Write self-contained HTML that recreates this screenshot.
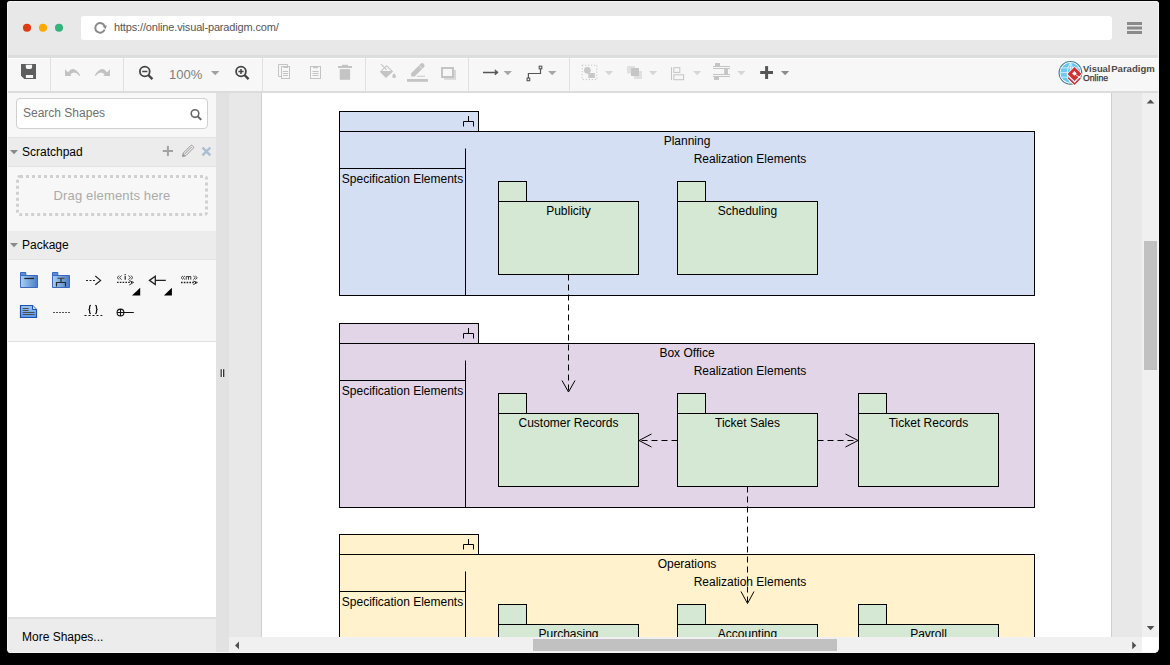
<!DOCTYPE html>
<html><head><meta charset="utf-8">
<style>
*{box-sizing:border-box;margin:0;padding:0}
html,body{width:1170px;height:665px;overflow:hidden;background:#000;font-family:"Liberation Sans",sans-serif}
.abs{position:absolute}
#frame{position:absolute;left:7px;top:1px;width:1152px;height:652px;background:#e8e8e8}
#edge{position:absolute;left:7px;top:1px;width:1152px;height:652px;border-radius:3px 3px 5px 4px;border:1px solid #f4f4f4;pointer-events:none}
svg{position:absolute;left:0;top:0}
.t12{font-size:12px;font-family:"Liberation Sans",sans-serif}
</style></head>
<body>
<div id="app" style="position:absolute;left:0;top:0;width:1170px;height:665px;clip-path:inset(1px 11px 12px 7px round 3px 3px 5px 4px)">
<div id="frame"></div>

<!-- title bar -->
<div class="abs" style="left:81px;top:16px;width:1031px;height:24px;background:#fff;border-radius:3px"></div>
<div class="abs" style="left:114px;top:20px;font-size:11px;color:#555;line-height:14px;letter-spacing:-0.15px">https://online.visual-paradigm.com/</div>

<!-- toolbar band -->
<div class="abs" style="left:8px;top:55px;width:1150px;height:3px;background:#dcdedd"></div>
<div class="abs" style="left:8px;top:58px;width:1150px;height:1px;background:#fdfdfd"></div>
<div class="abs" style="left:8px;top:59px;width:1150px;height:32px;background:#f7f7f7"></div>
<div class="abs" style="left:8px;top:91px;width:1150px;height:2px;background:#dcdcdc"></div>

<!-- sidebar -->
<div class="abs" style="left:8px;top:93px;width:208px;height:44px;background:#f7f7f7"></div>
<div class="abs" style="left:16px;top:98px;width:192px;height:31px;background:#fff;border:1px solid #d0d0d0;border-radius:4px"></div>
<div class="abs" style="left:23px;top:106px;font-size:12px;color:#707070;line-height:14px">Search Shapes</div>
<div class="abs" style="left:8px;top:137px;width:208px;height:30px;background:#ececec;border-top:1px solid #e2e2e2;border-bottom:1px solid #e2e2e2"></div>
<div class="abs" style="left:22px;top:145px;font-size:12px;color:#000;line-height:14px">Scratchpad</div>
<div class="abs" style="left:8px;top:167px;width:208px;height:64px;background:#f7f7f7"></div>
<div class="abs" style="left:16px;top:175px;width:192px;height:41px;border:3px dotted #d0d0d0;border-radius:4px"></div>
<div class="abs" style="left:8px;top:188px;width:208px;text-align:center;font-size:13px;color:#aaaaaa;line-height:16px;letter-spacing:0.15px">Drag elements here</div>
<div class="abs" style="left:8px;top:231px;width:208px;height:29px;background:#ececec;border-bottom:1px solid #e2e2e2"></div>
<div class="abs" style="left:22px;top:238px;font-size:12px;color:#000;line-height:14px">Package</div>
<div class="abs" style="left:8px;top:260px;width:208px;height:81px;background:#f7f7f7"></div>
<div class="abs" style="left:8px;top:341px;width:208px;height:1px;background:#e0e0e0"></div>
<div class="abs" style="left:8px;top:342px;width:208px;height:275px;background:#fff"></div>
<div class="abs" style="left:8px;top:617px;width:208px;height:36px;background:#ececec;border-top:2px solid #e0e0e0"></div>
<div class="abs" style="left:22px;top:630px;font-size:12px;color:#000;line-height:14px">More Shapes...</div>

<!-- divider + canvas -->
<div class="abs" style="left:216px;top:93px;width:13px;height:560px;background:#e2e2e2"></div>
<div class="abs" style="left:229px;top:93px;width:913px;height:544px;background:#e8e8e8"></div>
<div class="abs" style="left:261px;top:93px;width:851px;height:544px;background:#fff;border-left:1px solid #cfcfcf;border-right:1px solid #cfcfcf"></div>

<!-- scrollbars -->
<div class="abs" style="left:1142px;top:93px;width:16px;height:544px;background:#f0f0f0"></div>
<div class="abs" style="left:1144px;top:241px;width:13px;height:129px;background:#c1c1c1"></div>
<div class="abs" style="left:229px;top:637px;width:913px;height:16px;background:#f0f0f0"></div>
<div class="abs" style="left:533px;top:639px;width:304px;height:12px;background:#c1c1c1"></div>
<div class="abs" style="left:1142px;top:637px;width:16px;height:16px;background:#fff"></div>

<!-- all vector stuff -->
<svg width="1170" height="665" viewBox="0 0 1170 665">
  <!-- traffic lights -->
  <circle cx="27" cy="27.7" r="4.05" fill="#df3a13"/>
  <circle cx="43" cy="27.7" r="4.05" fill="#fdab00"/>
  <circle cx="59" cy="27.7" r="4.05" fill="#35b37d"/>
  <!-- reload -->
  <path d="M104.6 29.5 A4.8 4.8 0 1 1 104.6 26.3" fill="none" stroke="#8a8a8a" stroke-width="2"/>
  <path d="M102.8 26.6 L106.9 25.2 L105.6 29.3 Z" fill="#8a8a8a"/>
  <!-- hamburger -->
  <rect x="1127" y="22" width="15" height="3" fill="#8a8a8a"/>
  <rect x="1127" y="26.5" width="15" height="3" fill="#8a8a8a"/>
  <rect x="1127" y="31" width="15" height="3" fill="#8a8a8a"/>


  <!-- save -->
  <path d="M21 64H36V79H24.3L21 75.7Z M25.8 64.8V67.2Q25.8 69 27.6 69H30.3Q32.1 69 32.1 67.2V64.8Z M25.9 75V78H33.1V75Z" fill="#5e5e5e" fill-rule="evenodd"/>
  <!-- undo / redo -->
  <g fill="#c2c2c2">
    <path d="M65 69.3V76H71.6Z"/>
    <path d="M67.4 73.2Q73.5 63.6 80.3 75.4L79.5 75.9Q73.5 69.6 69.9 75.2Z"/>
    <path d="M110 69.3V76H103.4Z"/>
    <path d="M107.6 73.2Q101.5 63.6 94.7 75.4L95.5 75.9Q101.5 69.6 105.1 75.2Z"/>
  </g>
  <!-- zoom out/in -->
  <g fill="none" stroke="#444">
    <circle cx="144.8" cy="71.5" r="4.9" stroke-width="1.8"/>
    <path d="M148.3 75 L152.4 79.1" stroke-width="2.4"/>
    <path d="M142.2 71.5H147.4" stroke-width="1.5"/>
    <circle cx="241" cy="71.5" r="4.9" stroke-width="1.8"/>
    <path d="M244.5 75 L248.6 79.1" stroke-width="2.4"/>
    <path d="M238.4 71.5H243.6M241 68.9V74.1" stroke-width="1.5"/>
  </g>
  <text x="169" y="79" font-family="Liberation Sans, sans-serif" font-size="13" fill="#7e7e7e">100%</text>
  <g fill="#a0a0a0">
    <path d="M211 71H219.4L215.2 75.2Z"/>
  </g>
  <!-- copy / paste / delete -->
  <g fill="none" stroke="#c4c4c4" stroke-width="1">
    <path d="M281.5 76.5H278.5V64.5H287.5V66.5"/>
    <rect x="281.5" y="66.5" width="8" height="12" fill="#f7f7f7"/>
    <path d="M283 71.5H288M283 73.5H288M283 75.5H288"/>
    <rect x="310.5" y="66.5" width="10" height="12"/>
    <path d="M312.5 71.5H318.5M312.5 73.5H318.5M312.5 75.5H318.5"/>
  </g>
  <g fill="#c4c4c4">
    <rect x="283.5" y="66.8" width="4.5" height="1.2"/>
    <rect x="313" y="66.8" width="5" height="1.4"/>
    <rect x="338" y="66" width="14" height="2"/>
    <rect x="342" y="64.8" width="6" height="1.4"/>
    <rect x="339.8" y="69.1" width="10.3" height="10.7"/>
  </g>
  <!-- fill / line / shadow -->
  <g fill="#c4c4c4">
    <path d="M386.5 65L393.2 71.4L385.9 78L379.8 71.7Z"/>
    <path d="M381.9 70.9 L386.5 66.6 L391.1 70.9Z" fill="#f7f7f7"/>
    <path d="M394.1 73.2Q396 75.4 396 76.2A1.9 1.9 0 0 1 392.2 76.2Q392.2 75.4 394.1 73.2Z"/>
    <path d="M381 64.2L386.6 69.8" stroke="#c4c4c4" stroke-width="1.1" fill="none"/>
    <path d="M411.2 73.2L420.9 63.5Q422.4 62.5 423.9 64Q425.2 65.5 424.2 66.9L414.6 76.6H411.2Z"/>
    <path d="M419 65.6L422.6 69.2" stroke="#f7f7f7" stroke-width="0.7" fill="none"/>
    <rect x="407" y="79" width="21" height="2.8"/>
    <rect x="417" y="75.8" width="8" height="0.9"/>
    <rect x="444.2" y="70" width="11.8" height="9.8" fill="#d8d8d8"/>
    <path d="M441 67H454V78H441Z M443 69V76H452V69Z" fill-rule="evenodd"/>
    <rect x="443" y="69" width="9" height="7" fill="#f7f7f7"/>
  </g>
  <!-- connector arrow / waypoint -->
  <g stroke="#555" fill="none">
    <path d="M483 72.4H496" stroke-width="1.5"/>
    <path d="M495 69.8L498.2 72.4L495 75Q496.2 72.4 495 69.8Z" fill="#555" stroke-width="0.8"/>
    <path d="M528.4 77.9V73.5H540.5V69" stroke-width="1.2"/>
    <rect x="527.1" y="78.1" width="2.6" height="2.6" stroke-width="1.1"/>
    <rect x="539.2" y="66.2" width="2.6" height="2.6" stroke-width="1.1"/>
  </g>
  <g fill="#a6a6a6">
    <path d="M503.6 71H512L507.8 75.2Z"/>
    <path d="M548 71H556.4L552.2 75.2Z"/>
  </g>
  <!-- group / arrange / align / distribute -->
  <g fill="#c8c8c8">
    <rect x="582.2" y="65.2" width="14.6" height="14.4" fill="none" stroke="#bdbdbd" stroke-width="1" stroke-dasharray="1 2"/>
    <circle cx="587.4" cy="70.3" r="3.4"/>
    <rect x="588.3" y="73" width="6.6" height="5"/>
    <path d="M604.8 71H613.2L609 75.2Z" fill="#d6d6d6"/>
    <rect x="627" y="66" width="8" height="7.5" fill="#e0e0e0"/>
    <rect x="634" y="71" width="8" height="8" fill="#e0e0e0"/>
    <rect x="631" y="68" width="8" height="8" fill="#c6c6c6"/>
    <path d="M648.8 71H657.2L653 75.2Z" fill="#d6d6d6"/>
    <path d="M693 71H701.2L697.1 75.2Z" fill="#d6d6d6"/>
    <path d="M781 71H789.2L785.1 75.2Z" fill="#8c8c8c"/>
    <path d="M737.2 71H745.4L741.3 75.2Z" fill="#d6d6d6"/>
  </g>
  <g fill="none" stroke="#c4c4c4" stroke-width="1">
    <path d="M671.5 67.2V80"/>
    <rect x="673.8" y="67.7" width="6" height="4.7"/>
    <rect x="673.8" y="74.8" width="9.8" height="4.9"/>
    <path d="M713 66.5H730M713 68.5H730M713 74.5H730M713 76.5H730"/>
  </g>
  <g fill="#c4c4c4">
    <rect x="715" y="63" width="5" height="3.2"/>
    <rect x="724.2" y="68.5" width="3.7" height="6"/>
    <rect x="714" y="76.5" width="5" height="3.4"/>
  </g>
  <g fill="#555">
    <rect x="760.2" y="71" width="12.8" height="3"/>
    <rect x="765.1" y="66.1" width="3" height="12.9"/>
  </g>


  <!-- logo -->
  <g>
    <circle cx="1070.4" cy="72.8" r="11.3" fill="#fff" stroke="#3d7c99" stroke-width="1.1"/>
    <circle cx="1070.4" cy="72.8" r="10" fill="#6cc8f2"/>
    <g fill="none" stroke="#e6f6fd" stroke-width="0.8">
      <path d="M1060.4 67.9H1080.4M1060.4 72.6H1080.4M1060.4 77.2H1080.4"/>
      <path d="M1070.4 62.8V82.8"/>
      <path d="M1070.4 62.8Q1064 72.8 1070.4 82.8M1070.4 62.8Q1076.8 72.8 1070.4 82.8"/>
    </g>
    <path d="M1066.8 78.6L1074.5 86L1082 78.6L1080.6 77.3L1074.5 83.2L1068.2 77.3Z" fill="#fff"/>
    <path d="M1066.5 74.2L1074.5 66.2L1082.4 74.2L1074.5 82.1Z" fill="#fff"/>
    <path d="M1067.5 74.1L1074.5 67L1081.5 74.1L1074.5 81.1Z" fill="#d0302f"/>
    <path d="M1067.6 78.3L1074.5 85L1081.3 78.3L1080.2 77.3L1074.5 82.9L1068.7 77.3Z" fill="#d0302f"/>
    <path d="M1072.1 73.4L1074.4 71.1L1076.7 73.4L1074.4 75.7Z" fill="#fff"/>
    <path d="M1075.6 74.6L1080.6 78.2" stroke="#fff" stroke-width="0.9"/>
  </g>
  <text x="1083" y="72" font-family="Liberation Sans, sans-serif" font-size="9.4" font-weight="bold" fill="#4a4a4a" textLength="27.4" lengthAdjust="spacingAndGlyphs">Visual</text>
  <text x="1111.2" y="72" font-family="Liberation Sans, sans-serif" font-size="9.4" font-weight="bold" fill="#4a4a4a" textLength="43.6" lengthAdjust="spacingAndGlyphs">Paradigm</text>
  <text x="1083" y="80.7" font-family="Liberation Sans, sans-serif" font-size="9" fill="#333" stroke="#333" stroke-width="0.25" textLength="25" lengthAdjust="spacingAndGlyphs">Online</text>


  <!-- sidebar icons -->
  <g fill="none" stroke="#666" stroke-width="1.6">
    <circle cx="195" cy="113.6" r="3.8"/>
    <path d="M197.8 116.5L201.3 119.9" stroke-width="2"/>
  </g>
  <g fill="#8a8a8a">
    <path d="M10 150H18L14 154.2Z"/>
    <path d="M10 243H18L14 247.2Z"/>
  </g>
  <g fill="#a2a2a2">
    <rect x="162.8" y="150" width="10.2" height="2"/>
    <rect x="166.9" y="145.9" width="2" height="10.2"/>
  </g>
  <g fill="none" stroke="#9a9a9a" stroke-width="1">
    <path d="M182.5 156.3L183.3 153L190.8 145.5Q191.6 144.9 192.4 145.6L193.4 146.6Q194 147.4 193.4 148.1L185.9 155.6Z"/>
    <path d="M184.3 154.4L191.8 146.9"/>
  </g>
  <path d="M182.2 157L183 153.6L185.6 156.2Z" fill="#9a9a9a"/>
  <path d="M202.5 147.5L210.3 155.3M210.3 147.5L202.5 155.3" stroke="#a9bdd5" stroke-width="2.4" fill="none"/>


  <!-- package shapes -->
  <defs>
    <linearGradient id="fold" x1="0" y1="0" x2="1" y2="0">
      <stop offset="0" stop-color="#a6d0f3"/><stop offset="1" stop-color="#4b7bc9"/>
    </linearGradient>
    <linearGradient id="note" x1="0" y1="0" x2="0" y2="1">
      <stop offset="0" stop-color="#9cc4f0"/><stop offset="1" stop-color="#5a96e6"/>
    </linearGradient>
  </defs>
  <g stroke="#3b68bd" stroke-width="1" fill="url(#fold)">
    <path d="M20.5 272.5H25.8V275.5H20.5Z" fill="#5b8fd3"/>
    <path d="M20.5 287.5V275.5H37.5V287.5Z"/>
    <path d="M52.5 272.5H57.8V275.5H52.5Z" fill="#5b8fd3"/>
    <path d="M52.5 287.5V275.5H69.5V287.5Z"/>
  </g>
  <path d="M24.3 278.5H34" stroke="#222" stroke-width="1.2"/>
  <g stroke="#2a2a2a" fill="none" stroke-width="1">
    <path d="M57.5 278.3H64.5" stroke-width="1.3" stroke="#555"/>
    <path d="M61 278.3V282.3M56.5 286.5V282.5H65.5V286.5" stroke-width="1.2"/>
  </g>
  <g stroke="#222" fill="none" stroke-width="1.2">
    <path d="M86 280.5H95" stroke-dasharray="2 1.5"/>
    <path d="M95.3 276L100.6 280.4L95.3 284.7"/>
    <path d="M117 282.4H132" stroke-dasharray="1.6 1.2" stroke-width="1.4"/>
    <path d="M129.2 280.6L133.6 282.4L129.2 285" stroke-width="0.9"/>
    <path d="M149.5 280.4L155.3 276.2V284.6Z M155.3 280.4H165.8" stroke-width="1.3"/>
    <path d="M181 282.5H196" stroke-dasharray="1.6 1.2" stroke-width="1.4"/>
    <path d="M193.3 281L197.4 282.5L193.3 284.6" stroke-width="0.9"/>
  </g>
  <g stroke="#3a3a3a" fill="none" stroke-width="0.9">
    <path d="M119.3 275.6L117 277.6L119.3 279.6M121.7 275.6L119.4 277.6L121.7 279.6"/>
    <path d="M128.3 275.6L130.6 277.6L128.3 279.6M130.7 275.6L133 277.6L130.7 279.6"/>
    <path d="M183 275.9L181 277.7L183 279.6M185 275.9L183 277.7L185 279.6"/>
    <path d="M193.3 275.9L195.3 277.7L193.3 279.6M195.3 275.9L197.3 277.7L195.3 279.6"/>
    <path d="M186.2 279.7V276.6H190.8V279.7M188.5 276.6V279.7" stroke-width="1"/>
  </g>
  <g fill="#4a4a4a">
    <rect x="124.5" y="274.1" width="1.5" height="1.1"/>
    <rect x="124.5" y="276.1" width="1.5" height="3.6"/>
  </g>
  <path d="M132 295.6L140.2 287.8V295.6Z M163.9 295.6L171.9 287.8V295.6Z" fill="#000"/>
  <path d="M20.5 317.5V305.5H32.5L36.5 309.5V317.5Z" fill="url(#note)" stroke="#1f4fae" stroke-width="1.2"/>
  <path d="M32.5 305.5V309.5H36.5" fill="#d8e8fa" stroke="#1f4fae" stroke-width="1"/>
  <g stroke="#444" stroke-width="0.9">
    <path d="M22.6 308.5H28.6M22.6 310.5H28.6M22.6 312.5H34.5M22.6 314.5H34.5"/>
  </g>
  <path d="M53 312.5H70.2" stroke="#555" stroke-width="1" stroke-dasharray="2 1"/>
  <g fill="none" stroke="#111" stroke-width="1.2">
    <path d="M90.9 305.4Q89.6 305.4 89.6 306.8V308.5Q89.6 309.5 88.4 309.5Q89.6 309.5 89.6 310.5V312.2Q89.6 313.6 90.9 313.6"/>
    <path d="M95.2 305.4Q96.5 305.4 96.5 306.8V308.5Q96.5 309.5 97.7 309.5Q96.5 309.5 96.5 310.5V312.2Q96.5 313.6 95.2 313.6"/>
  </g>
  <path d="M84.5 315.5H102.3" stroke="#111" stroke-width="1.2" stroke-dasharray="2 2"/>
  <g stroke="#111" fill="none" stroke-width="1.1">
    <circle cx="120.5" cy="312.5" r="3.4"/>
    <path d="M117.1 312.5H133.8M120.5 309.1V315.9"/>
  </g>


  <!-- scroll arrows + grip -->
  <g fill="#505050">
    <path d="M1146.6 103.6H1154.4L1150.5 99.6Z"/>
    <path d="M1146.8 626H1154.4L1150.6 630.2Z"/>
    <path d="M235 645.4L239 641.6V649.2Z"/>
    <path d="M1132.2 641.6L1136.3 645.4L1132.2 649.2Z"/>
  </g>
  <g>
    <rect x="220.6" y="369.2" width="1.3" height="7.8" fill="#333"/>
    <rect x="223" y="369.2" width="1.3" height="7.8" fill="#333"/>
    <rect x="221.9" y="369.2" width="1.1" height="7.8" fill="#fff"/>
  </g>

  <!-- toolbar separators -->
  <g fill="#e0e0e0">
    <rect x="50" y="58" width="1" height="33"/>
    <rect x="123" y="58" width="1" height="33"/>
    <rect x="262" y="58" width="1" height="33"/>
    <rect x="365" y="58" width="1" height="33"/>
    <rect x="468" y="58" width="1" height="33"/>
    <rect x="569" y="58" width="1" height="33"/>
  </g>
</svg>

<!-- diagram -->
<svg width="1170" height="665" viewBox="0 0 1170 665" style="clip-path:polygon(262px 93px,1111px 93px,1111px 637px,262px 637px)">
  <defs>
    <g id="pkgicon"><path d="M0 0v5.5M-5 10.5v-5h10v5" fill="none" stroke="#000" stroke-width="1"/></g>
  </defs>
  <g stroke="#000" stroke-width="1" font-family="Liberation Sans, sans-serif" font-size="12">
    <!-- Planning -->
    <rect x="339.5" y="111.5" width="139" height="20" fill="#d4dff3"/>
    <rect x="339.5" y="131.5" width="695" height="164" fill="#d4dff3"/>
    <path d="M465.5 148.5V295.5M339.5 168.5H465.5" fill="none"/>
    <use href="#pkgicon" x="468.5" y="116"/>
    <!-- Box Office -->
    <rect x="339.5" y="323.5" width="139" height="20" fill="#e1d5e7"/>
    <rect x="339.5" y="343.5" width="695" height="164" fill="#e1d5e7"/>
    <path d="M465.5 360.5V507.5M339.5 380.5H465.5" fill="none"/>
    <use href="#pkgicon" x="468.5" y="328"/>
    <!-- Operations -->
    <rect x="339.5" y="534.5" width="139" height="20" fill="#fff2cc"/>
    <rect x="339.5" y="554.5" width="695" height="164" fill="#fff2cc"/>
    <path d="M465.5 571.5V718.5M339.5 591.5H465.5" fill="none"/>
    <use href="#pkgicon" x="468.5" y="539"/>

    <!-- green packages -->
    <g fill="#d5e8d4">
      <rect x="498.5" y="181.5" width="28" height="20"/><rect x="498.5" y="201.5" width="140" height="73"/>
      <rect x="677.5" y="181.5" width="28" height="20"/><rect x="677.5" y="201.5" width="140" height="73"/>
      <rect x="498.5" y="393.5" width="28" height="20"/><rect x="498.5" y="413.5" width="140" height="73"/>
      <rect x="677.5" y="393.5" width="28" height="20"/><rect x="677.5" y="413.5" width="140" height="73"/>
      <rect x="858.5" y="393.5" width="28" height="20"/><rect x="858.5" y="413.5" width="140" height="73"/>
      <rect x="498.5" y="604.5" width="28" height="20"/><rect x="498.5" y="624.5" width="140" height="73"/>
      <rect x="677.5" y="604.5" width="28" height="20"/><rect x="677.5" y="624.5" width="140" height="73"/>
      <rect x="858.5" y="604.5" width="28" height="20"/><rect x="858.5" y="624.5" width="140" height="73"/>
    </g>
  </g>
  <g font-family="Liberation Sans, sans-serif" font-size="12" fill="#000" text-anchor="middle">
    <text x="687" y="145">Planning</text>
    <text x="750" y="163">Realization Elements</text>
    <text x="402.5" y="183">Specification Elements</text>
    <text x="568.5" y="215">Publicity</text>
    <text x="747.5" y="215">Scheduling</text>

    <text x="687" y="357">Box Office</text>
    <text x="750" y="375">Realization Elements</text>
    <text x="402.5" y="395">Specification Elements</text>
    <text x="568.5" y="427">Customer Records</text>
    <text x="747.5" y="427">Ticket Sales</text>
    <text x="928.5" y="427">Ticket Records</text>

    <text x="687" y="568">Operations</text>
    <text x="750" y="586">Realization Elements</text>
    <text x="402.5" y="606">Specification Elements</text>
    <text x="568.5" y="638">Purchasing</text>
    <text x="747.5" y="638">Accounting</text>
    <text x="928.5" y="638">Payroll</text>
  </g>
  <g stroke="#000" stroke-width="1" fill="none">
    <path d="M568.5 274.5V391.5" stroke-dasharray="6 4"/>
    <path d="M562 380.5L568.5 392L575 380.5"/>
    <path d="M677.5 440.5H639.5" stroke-dasharray="6 4"/>
    <path d="M651.5 434L639 440.5L651.5 447"/>
    <path d="M817.5 440.5H857.5" stroke-dasharray="6 4"/>
    <path d="M845.5 434L858 440.5L845.5 447"/>
    <path d="M747.5 486.5V603" stroke-dasharray="6 4"/>
    <path d="M741 591.5L747.5 603.5L754 591.5"/>
  </g>
</svg>
<div id="edge"></div>
</div>
</body></html>
